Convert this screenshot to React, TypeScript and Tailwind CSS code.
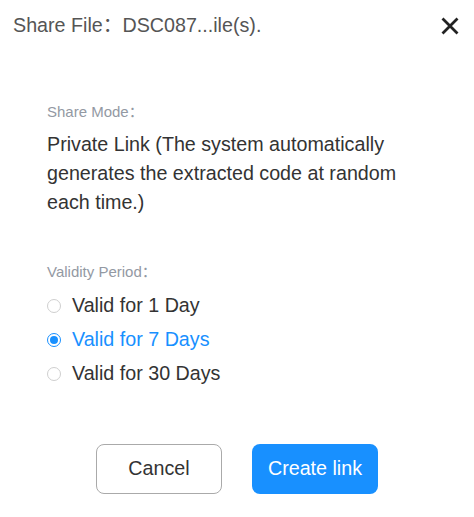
import React, { useState } from "react";

const options = ["Valid for 1 Day", "Valid for 7 Days", "Valid for 30 Days"];

export default function App() {
  const [period, setPeriod] = useState(1);

  return (
    <div className="min-h-screen w-full bg-white font-['Liberation_Sans','Noto_Sans_CJK_SC',Arial,sans-serif]">
      {/* Header */}
      <div className="flex items-center justify-between pl-[13px] pr-[13px] pt-[13px] h-[38px]">
        <span className="text-[19.7px] text-[#555]">Share File：DSC087...ile(s).</span>
        <button className="w-[22px] h-[22px] flex items-center justify-center text-[#222]">
          <svg width="18" height="18" viewBox="0 0 18 18" fill="none" stroke="currentColor" strokeWidth="2.8" strokeLinecap="butt">
            <path d="M1.5 1.5L16.5 16.5M16.5 1.5L1.5 16.5" />
          </svg>
        </button>
      </div>

      {/* Body */}
      <div className="px-[47px] pt-[64px]">
        <div className="text-[15px] text-[#9399a3] leading-[20px]">Share Mode：</div>
        <p className="mt-[8px] text-[19.7px] leading-[29px] text-[#333]">
          Private Link (The system automatically generates the extracted code at random each time.)
        </p>

        <div className="mt-[45px] text-[15px] text-[#9399a3] leading-[20px]">Validity Period：</div>
        <div className="mt-[7px] flex flex-col">
          {options.map((label, i) => {
            const checked = period === i;
            return (
              <label
                key={label}
                onClick={() => setPeriod(i)}
                className="flex items-center h-[34px] cursor-pointer"
              >
                <span
                  className={
                    checked
                      ? "w-[14px] h-[14px] rounded-full border-[1.5px] border-[#1890ff] flex items-center justify-center"
                      : "w-[14px] h-[14px] rounded-full border-[1.5px] border-[#cfcfcf]"
                  }
                >
                  {checked && <span className="w-[8px] h-[8px] rounded-full bg-[#1890ff]" />}
                </span>
                <span className={checked ? "ml-[11px] text-[19.7px] text-[#1890ff]" : "ml-[11px] text-[19.7px] text-[#333]"}>
                  {label}
                </span>
              </label>
            );
          })}
        </div>
      </div>

      {/* Footer */}
      <div className="flex justify-center gap-[30px] mt-[53px]">
        <button className="w-[126px] h-[50px] rounded-[8px] border border-[#aaa] bg-white text-[19.7px] text-[#333]">
          Cancel
        </button>
        <button className="w-[126px] h-[50px] rounded-[8px] bg-[#1890ff] text-[19.7px] text-white">
          Create link
        </button>
      </div>
    </div>
  );
}
